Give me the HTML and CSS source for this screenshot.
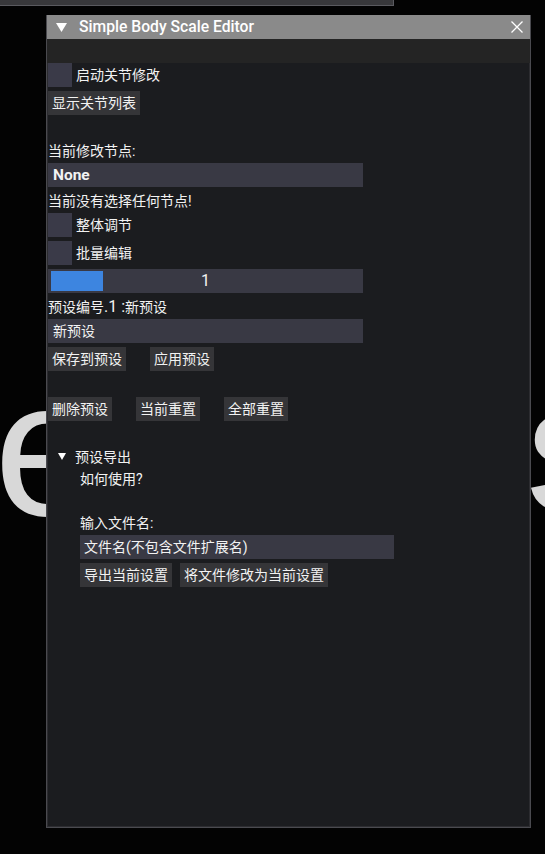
FILE: index.html
```html
<!DOCTYPE html>
<html lang="zh-CN">
<head>
<meta charset="utf-8">
<title>Simple Body Scale Editor</title>
<link rel="stylesheet" href="styles.css">
</head>
<body>
<div class="desk">
  <div class="topbar"></div>
  <div class="bgclip clip-left"><div class="bgtext bg-e">e</div></div>
  <div class="bgclip clip-right"><div class="bgtext bg-s">s</div></div>

  <div class="win">
    <div class="titlebar">
      <svg class="title-arrow" width="11" height="9" viewBox="0 0 11 9"><polygon points="0,0 11,0 5.5,9" fill="#ffffff"/></svg>
      <span class="title-text">Simple Body Scale Editor</span>
      <svg class="close" width="12" height="12" viewBox="0 0 12 12"><path d="M0.5 0.5 L11.5 11.5 M11.5 0.5 L0.5 11.5" stroke="#ffffff" stroke-width="1.3" fill="none"/></svg>
    </div>
    <div class="menubar"></div>
    <div class="content">
      <div class="check"><span class="box"></span><span class="label">启动关节修改</span></div>
      <div class="row"><span class="btn">显示关节列表</span></div>
      <div class="blank"></div>
      <div class="text">当前修改节点:</div>
      <div class="field"><span class="lat bold">None</span></div>
      <div class="text">当前没有选择任何节点!</div>
      <div class="check"><span class="box"></span><span class="label">整体调节</span></div>
      <div class="check"><span class="box"></span><span class="label">批量编辑</span></div>
      <div class="slider"><span class="grab"></span><span class="sval lat">1</span></div>
      <div class="text">预设编号<span class="lat">.1 :</span>新预设</div>
      <div class="field">新预设</div>
      <div class="row wide"><span class="btn">保存到预设</span><span class="btn">应用预设</span></div>
      <div class="blank"></div>
      <div class="row wide"><span class="btn">删除预设</span><span class="btn">当前重置</span><span class="btn">全部重置</span></div>
      <div class="blank"></div>
      <div class="tree-node">
        <svg class="tree-arrow" width="8" height="7" viewBox="0 0 8 7"><polygon points="0,0 8,0 4,7" fill="#ffffff"/></svg>
        <span class="label">预设导出</span>
      </div>
      <div class="tree-body">
        <div class="text">如何使用?</div>
        <div class="blank"></div>
        <div class="text">输入文件名:</div>
        <div class="field field-tree">文件名(不包含文件扩展名)</div>
        <div class="row"><span class="btn">导出当前设置</span><span class="btn">将文件修改为当前设置</span></div>
      </div>
    </div>
  </div>
</div>
</body>
</html>
```

FILE: styles.css
```css
html, body {
  margin: 0;
  padding: 0;
  background: #030303;
}

body {
  font-family: "Roboto", "Noto Sans CJK SC", sans-serif;
  font-size: 14px;
  line-height: 18px;
  color: #f2f2f2;
}

.desk {
  position: relative;
  width: 545px;
  height: 854px;
  overflow: hidden;
  background: #030303;
}

.topbar {
  position: absolute;
  left: 0;
  top: 0;
  width: 393px;
  height: 5px;
  background: #38383b;
  border-right: 1px solid #5a5a5f;
  border-bottom: 1px solid #5a5a5f;
}

/* large scene lettering behind the window, only the visible slivers */
.bgclip {
  position: absolute;
  top: 400px;
  height: 125px;
  overflow: hidden;
}

.clip-left {
  left: 0;
  width: 46px;
}

.clip-right {
  left: 531px;
  width: 14px;
}

.bgtext {
  position: absolute;
  font-family: "Liberation Sans", sans-serif;
  line-height: 1;
  color: #d8d8d8;
}

.bg-e {
  left: -6px;
  top: -48px;
  font-size: 193px;
}

.bg-s {
  left: -5px;
  top: -42px;
  font-size: 180px;
}

.win {
  position: absolute;
  left: 46px;
  top: 15px;
  width: 483px;
  height: 812px;
  border: 1px solid #4a4a4f;
  border-top: 0;
  box-shadow: inset 0 0 0 1px #2c2c30;
  background: #1b1c1f;
  display: flex;
  flex-direction: column;
}

.titlebar {
  height: 24px;
  background: #8a8a8a;
  display: flex;
  align-items: center;
  flex-shrink: 0;
}

.title-arrow {
  margin-left: 9px;
  flex-shrink: 0;
}

.title-text {
  margin-left: 12px;
  font-family: "Roboto", sans-serif;
  font-size: 15.7px;
  font-weight: 500;
  color: #ffffff;
  flex: 1;
}

.close {
  margin-right: 7px;
}

.menubar {
  height: 24px;
  background: #242424;
  flex-shrink: 0;
}

.content {
  display: flex;
  flex-direction: column;
  gap: 4px;
  padding-left: 1px;
}

.check {
  display: flex;
  align-items: center;
  gap: 4px;
  height: 24px;
}

.box {
  width: 24px;
  height: 24px;
  background: #3a3a48;
}

.row {
  display: flex;
  gap: 8px;
}

.row.wide {
  gap: 24px;
}

.btn {
  height: 24px;
  line-height: 24px;
  padding: 0 4px;
  background: #353538;
}

.blank {
  height: 18px;
}

.text {
  height: 17px;
  padding-top: 1px;
}

.field {
  width: 315px;
  height: 24px;
  line-height: 24px;
  box-sizing: border-box;
  padding-left: 5px;
  background: #393944;
}

.field-tree {
  width: 314px;
  padding-left: 4px;
}

.lat {
  font-family: "Roboto", sans-serif;
  font-size: 16px;
}

.bold {
  font-weight: 700;
  font-size: 15.5px;
}

.slider {
  width: 315px;
  height: 24px;
  background: #393944;
  display: grid;
  align-items: center;
}

.slider > * {
  grid-area: 1 / 1;
}

.grab {
  justify-self: start;
  width: 52px;
  height: 20px;
  margin-left: 3px;
  background: #3d85e0;
}

.sval {
  justify-self: center;
  line-height: 24px;
}

.tree-node {
  display: flex;
  align-items: center;
  height: 18px;
}

.tree-arrow {
  margin-left: 10px;
}

.tree-node .label {
  margin-left: 9px;
  padding-top: 2px;
}

.tree-body {
  display: flex;
  flex-direction: column;
  gap: 4px;
  padding-left: 32px;
}
```
